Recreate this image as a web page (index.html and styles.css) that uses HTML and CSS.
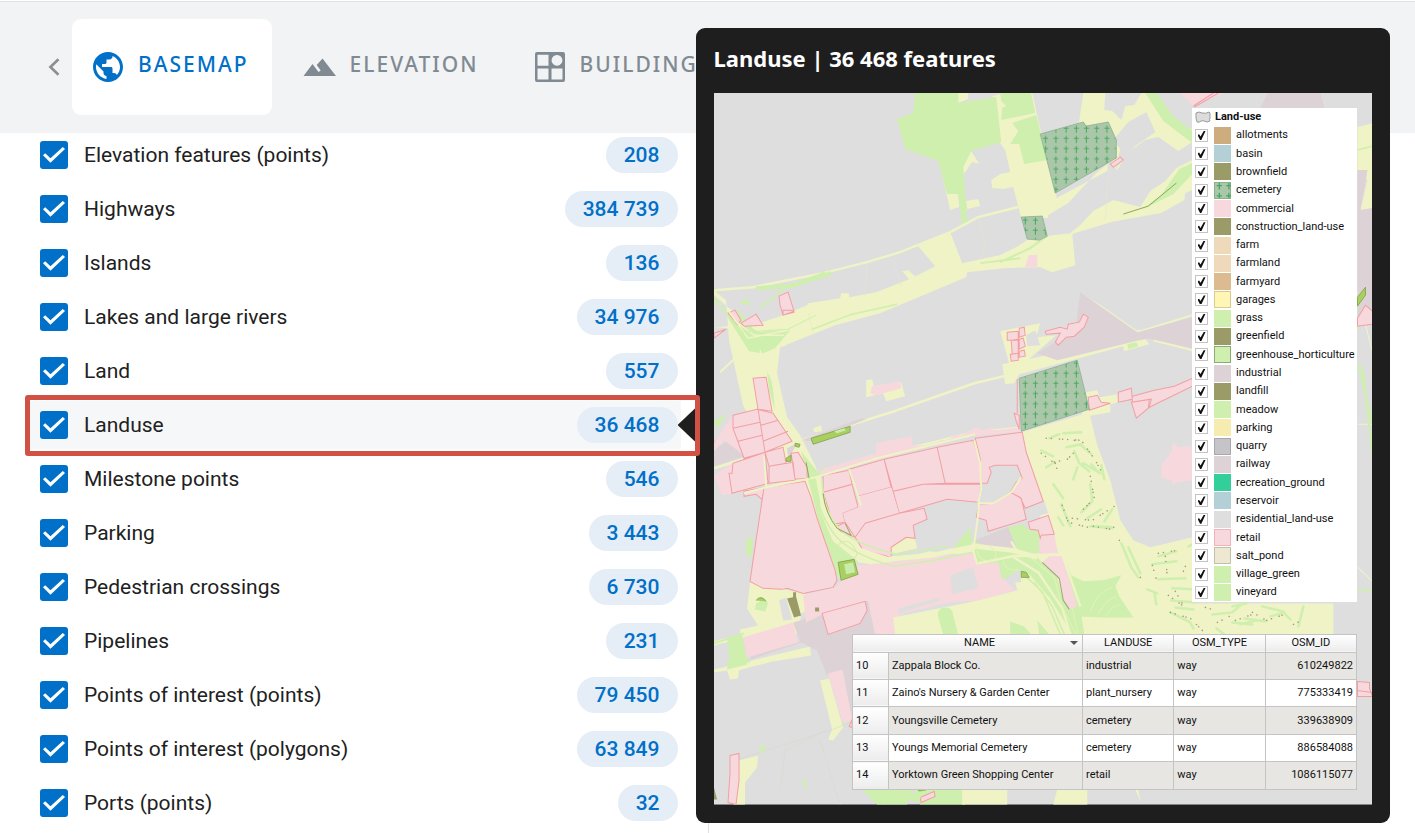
FILE: index.html
```html
<!DOCTYPE html>
<html lang="en">
<head>
<meta charset="utf-8">
<title>Basemap layers</title>
<link rel="stylesheet" href="styles.css">
</head>
<body>
<header class="tabs">
  <button class="scroll-btn" type="button" aria-label="Scroll left"><svg viewBox="0 0 12 18"><path d="M10.5 1.2 2.4 9l8.100 7.800" fill="none" stroke="#8b8f92" stroke-width="2.600"/></svg></button>
  <nav class="tab-list">
    <button class="tab tab-active" type="button">
      <svg class="tab-icon" viewBox="0 0 24 24"><path fill="currentColor" d="M12 2C6.480 2 2 6.480 2 12s4.480 10 10 10 10-4.480 10-10S17.520 2 12 2zm-1 17.930c-3.950-.49-7-3.850-7-7.930 0-.62.080-1.210.210-1.790L9 15v1c0 1.100.9 2 2 2v1.930zm6.900-2.540c-.26-.81-1-1.390-1.900-1.390h-1v-3c0-.55-.45-1-1-1H8v-2h2c.55 0 1-.45 1-1V7h2c1.100 0 2-.9 2-2v-.41c2.930 1.190 5 4.060 5 7.410 0 2.080-.8 3.970-2.100 5.390z"/></svg>
      <span>BASEMAP</span>
    </button>
    <button class="tab" type="button">
      <svg class="tab-icon" viewBox="0 0 36 36"><path fill="currentColor" d="M1.500 27 10.500 15l6 8 2.200-1.600-4-5.400L20.500 9.500 34 27z"/></svg>
      <span>ELEVATION</span>
    </button>
    <button class="tab" type="button">
      <svg class="tab-icon" viewBox="0 0 36 36"><path fill="currentColor" fill-rule="evenodd" d="M5 3h26a2 2 0 0 1 2 2v26a2 2 0 0 1-2 2H5a2 2 0 0 1-2-2V5a2 2 0 0 1 2-2zM5.500 5.800v11h11v-11zM5.500 19.500v11h11v-11zM19.500 19.500v11h11v-11zM25 6a5.400 5.400 0 1 0 .01 0z"/></svg>
      <span>BUILDINGS</span>
    </button>
  </nav>
</header>

<main class="panel">
  <ul class="layers">
    <li class="layer"><label><input class="tick" type="checkbox" checked>Elevation features (points)</label><span class="count">208</span></li>
    <li class="layer"><label><input class="tick" type="checkbox" checked>Highways</label><span class="count">384 739</span></li>
    <li class="layer"><label><input class="tick" type="checkbox" checked>Islands</label><span class="count">136</span></li>
    <li class="layer"><label><input class="tick" type="checkbox" checked>Lakes and large rivers</label><span class="count">34 976</span></li>
    <li class="layer"><label><input class="tick" type="checkbox" checked>Land</label><span class="count">557</span></li>
    <li class="layer layer-current"><label><input class="tick" type="checkbox" checked>Landuse</label><span class="count">36 468</span><span class="pointer"></span><span class="outline"></span></li>
    <li class="layer"><label><input class="tick" type="checkbox" checked>Milestone points</label><span class="count">546</span></li>
    <li class="layer"><label><input class="tick" type="checkbox" checked>Parking</label><span class="count">3 443</span></li>
    <li class="layer"><label><input class="tick" type="checkbox" checked>Pedestrian crossings</label><span class="count">6 730</span></li>
    <li class="layer"><label><input class="tick" type="checkbox" checked>Pipelines</label><span class="count">231</span></li>
    <li class="layer"><label><input class="tick" type="checkbox" checked>Points of interest (points)</label><span class="count">79 450</span></li>
    <li class="layer"><label><input class="tick" type="checkbox" checked>Points of interest (polygons)</label><span class="count">63 849</span></li>
    <li class="layer"><label><input class="tick" type="checkbox" checked>Ports (points)</label><span class="count">32</span></li>
  </ul>
</main>

<aside class="popup">
  <h2 class="popup-title">Landuse | 36 468 features</h2>
  <div class="map">
    <svg class="map-art" viewBox="714 93 658 711" aria-label="Land use map">
      <defs>
        <pattern id="graves" width="10.200" height="10.200" patternUnits="userSpaceOnUse" patternTransform="translate(1020 369)">
          <rect width="10.200" height="10.200" fill="#abc7aa"/>
          <path d="M5 1.500v7M2.500 4h5" stroke="#45a75d" stroke-width="1"/>
        </pattern>
      </defs>
      <rect x="714" y="93" width="658" height="711" fill="#dedede"/>

      <g fill="#eff3c6">
        <path d="M988 93h44l15 67 9 35 1 12-9 6v5h-27l-8-31-10 2-11-1-1-8 9-6 10-2-5-22-6-8-5-44zM958 93h10v6l-10 4zM971 151l8 13-7-2-9 13v-10zM947 194h11l1 13-9 3-11-47zM966 201l12-2 2 7-13 3z"/>
        <path d="M918 246l32-14 12 31 38-8 18-9 12-8 42-5 3 32-23 7-12-5-37 1-36 4-1 5-86 36-45 12-55 22-27-17-38-3 44-4 24-8 24-10 1-2 32-5 1-5h8v4l27-5 33-13-7-8 6-1 7 6 20-10z"/>
        <path d="M1083 93h22l-1 17 8 1 9 9 4-14 9-1 7-12h7l20 22 24 15v12l-14 9-20-14-13 3-19 14-7 13-3 3-5-9-15 12-28 30-20 12-1-12 60-32 2-30-9-17-22 3z"/>
        <path d="M1192 160l-16 8-11 13-15 10-10 16-27-7-20 11-14 15-9 7 2 1 39-12 50-9 23-13 1-7 7-3zM1357 127l15-4v85l-12 2 7-30-10-10z"/>
        <path d="M714 295l14 12 25 20 30-2 4 20-7 2-3 26 10 44 13 18 15 30 18 52 23 20 32 20 45-4 40-11 38 8 40 2v12l-70-8-52-5-50 14-38-5-33-21-22-40-18-50-25-44-14-65-3-40-22-18-23-32z"/>
        <path d="M758 625l-11-17 3-26 53 11 20 10-22 10-2 20-58 4-1-8zM753 635l-39 10v-4l28-8zM714 669l26-6 70-17 1 9-38 6-24 6-10 3-1 8-8 1-3-9-13 2z"/>
        <path d="M820 680l9-2 14 49-10 13-5-1 4-10zM739 760l19-5-1 12-12 15v22h-11l5-24z"/>
        <path d="M1021 432l68-20 8 33 13 35 10 40 13 20 17 7 42-10v66h141v31H1040V510z"/>
        <path d="M866 380l6-1 2 8 27-5 4 14-19 5-3-8-17 4zM1002 364l60-12 45-10 8-3 25-10v12l-35 10-86 23-5 9-9 1zM1086 392l11-2 2 7 18-3 1 8-8 2v8l-29 5zM1122 344l23-5 4 5-25 7zM1000 331l40-8-4 14 20-2-30 26-16 6zM813 428l8-3 1 6-8 1z"/>
      </g>
      <g fill="#dedede">
        <path d="M983 93h22l-17 4-14 2zM1026 335l9-5 5 15-13 1zM1113 140l15-18 18-10 9 20-20 14-20 23 5-20z"/>
      </g>
      <g fill="none" stroke="#eff3c6" stroke-width="2">
        <path d="M714 290l39-3 70-14 44-11 33-10 50-20 28-15 40-10M714 468l110-35 70-22 80-28 38-9" stroke-width="2.500"/>
        <path d="M816 474l60-18 97-24 50-5M714 468l55-16M720 372l30-28M765 487l46-10M1137 332l-37-26-15-9M1137 332l55-17M1153 340l39 10"/>
        <path d="M1357 424h15M1357 567l15 14M1372 352l-15-60" stroke-width="1"/>
        <path d="M808 313l5 20" stroke="#e3e5cf" stroke-width="0.500"/>
        <path d="M978 217l7 26-4 15M893 258l8 28M867 263l-2 33M1110 140l-5 80" stroke="#e4e5d2" stroke-width="0.600"/>
        <path d="M740 758l90-28 20-8M780 790l5-40 40-20M820 740l20 64" stroke="#d6dacb" stroke-width="0.600"/>
      </g>

      <g fill="#ceefad">
        <path d="M915 93h43v10l38-6 5 45-30 9-8 16 4 55-5 2-4-30h-11l-9-33-33-12-8-30 16-6z"/>
        <path d="M1000 93h31l4 20-34 7 1-12 4-2-5-5zM1012 123l24-8 11 45-23 4-5-20h-9l8-13z"/>
        <path d="M1145 93h12l15 22 20 16v12l-29-22zM1192 163l-13 6-18 26-20 15 32-16 19-20z"/>
        <path d="M738 310l18 22 34-2-15 18-12 5-14-2-22-35zM767 371l5 10 3 29-6-20zM801 451l20 25-1 35 13 30 25 20-25 20-17-70zM950 551l20-24 3 22zM746 539l7-2-1 20-6-3z"/>
        <path d="M751 305l-13-3 9-3z"/>
        <path d="M756 603l9-5 3 5-3 8-10-2zM727 637l15-3 4 20 4 8-20 1zM728 660l16-4 3 8-20 5z"/>
        <path d="M862 789h50l-5 15h-30zM915 789h50v15h-45zM802 780l5 1-2 8zM759 746l8-1-6 9zM841 722l4-2-1 6zM1127 344l9-2 2 4-10 3z"/>
        <path d="M714 420l12-5-9 14z"/>
      </g>
      <g fill="none" stroke="#ceefad">
        <path d="M756 288l35-2 40-13" stroke-width="4"/>
        <path d="M760 308l25-20 40-16M1000 262l30-14 18-13M980 263l40-5" stroke-width="2"/>
        <path d="M812 329l40-15 45-10M1357 150l15-4" stroke-width="1.500"/>
        <path d="M1357 300v30" stroke-width="2"/>
        <path d="M1358 365l14 58M1362 365l10 90M1357 590h15M714 643l30-10M714 299l20 22 30 14" stroke-width="2"/>
      </g>

      <g fill="#ddd2d6">
        <path d="M1267 93h53l4 15h-64zM1357 170l10 0-7 40 12-2v99l-15 10z"/>
        <path d="M1080 292l20 14 37 26 55-15v31l-45-10-90 22-20-7 38-23z"/>
        <path d="M714 450l14-10 16 16-30 10zM728 430l5-2 8 17-13-4zM714 440h5v6l-5 2zM787 448l10-5-5 9-3 14z"/>
        <path d="M793 622l75-22 7 34-23 0 0 86-4-20-5-30-16 5-10-25-16-8-50 17 0-4 49-14z"/>
        <path d="M801 440l60-22 5 1-55 22z"/>
      </g>

      <g fill="#f7d9dd">
        <path d="M876 443l36-7v10l21-2 8-4 7 0 6-5 8 0 10-6 4-2 6 3 11-3 0 3 29-3v4l-51 5-152 38-1-4 58-17zM714 475l18-12 10 29-20 3zM724 427l9-12 11 40-20-15-10 11v-7z"/>
        <path d="M803 595l32-8 23-22 32-3 45-5 38-5 25 10 5 16 12 12-37 10-29 2-60 14 11-3 3 21h-28l-7-34-46 14-16 8z"/>
        <path d="M743 637l50-15 5 20-51 15zM828 673l14-4 10 50-9 4zM872 386l28-5 1 7-25 7-6-2zM1161 465l10-13 2-10 5 5 14-1v34l-15 2-4 3-2-5-10-3z"/>
        <path d="M1180 93h44l-31 13zM1026 262l3-7h8v12h-12z"/>
      </g>
      <path fill="#eff3c6" d="M893 617l85-17 39-10-2-8h6l-1-9 20-5 44 66H895z"/>
      <g fill="#ceefad">
        <path d="M973 540l44 13 20 4 20 20 5 20 18 10 4 27h-12l-22-36-20-23-10-6-18 11-4-18-22 2zM1008 527l14-3 8 6 9 1v22l-21 1z"/>
        <path d="M938 616q-1-9 7-9t8 8l5 19h-15zM1010 621l14 5 7 8h-21zM1037 620l12 14h-10z"/>
        <path d="M1063 555l8 20 12 6 20-1 18-5-6 11 4 10 14 21h-30l-23-1-8-15z"/>
      </g>
      <path fill="#ddd2d6" d="M972 541l36-14 11 27z"/>
      <path fill="#f7d9dd" d="M1039 536l15-3 2 12 2 8-19 1zM1042 562l8-7 12 1 15 50-8 3-6-11-3-18z"/>
      <path fill="#dedede" d="M914 525l3 23 32-9 24-22-1-8-34 0-15 4 4 6zM950 575l23-8 5 21-26 6zM898 608l42-11v3l-42 13zM779 600l7-3 6 22-9 1zM1024 507l20-6 4 12-20 5z"/>
      <path fill="#eff3c6" d="M892 546l16-9 6-2 3 13-26 6z"/>
      <g fill="#f7d9dd" stroke="#f29fa4" stroke-width="1">
        <path d="M779 296l9-4 6 19-11 4-3-10zM728 313l7-3 6 10-4 5zM741 323l15-9 7 11-19 1zM783 310h9l2 2-11 3zM714 333l12-4-12 9z"/>
        <path d="M753 378l13-1 6 34-14-2zM733 415l24-6 16 4 19 28-27 11-21 6-11-30zM733 463l32-11 3 31-36 10-3-20h3zM765 452l18-5 3 16-17 3zM769 466l24-4 2 18-26 3zM791 453l7-1 9 15v11l-12 1zM744 491l21-4-3 12-6-5-12 2z"/>
        <path d="M764 487l41-6 6 16 6 21 18 52 2 10-4 7-30 6-16-5-5 1-19-1-13-7 3-21z"/>
        <path d="M823 475l26-5 3 14-29 8zM823 492l29-8 6 23-15 6 2 9-12 2zM849 469l35-10 7 28-33 9zM884 459l53-12 8 36-22 1-30 7zM937 447l36-7 7 20 1 23h-36zM893 491l30-7h58l-3 18-31-3-48 14z"/>
        <path d="M858 496l33-9 8 26-34 10-10 14-10-15-2-9 15-6z" stroke="none"/>
        <path d="M865 523l34-10 25-5 3 11-14 6 2 13-9-1-15 10v10l-28-7-8-13zM845 522l10 15-22-9z"/>
        <path d="M975 438l47-6 4 20 17 49-18 7-5-11-10-5 6-10 6-4-5-13-22 0-6 2 2 5-4 11h-6l-1-25zM979 504l14-1 17-11 11 6 5 21-38 12-2-11-10-3z"/>
        <path d="M1028 522l20-7 6 19-13 1-1 3-2-8-8-1zM822 613l43-12 2 9-7 13-32 11zM730 755l9-2v27l-3 24-8-2 2-29zM920 797l14-6 1 5-14 6zM849 726l3-7v8z"/>
        <path d="M1007 332l11-1v9h-11zM1019 328l5-1 1 8-6 2zM1011 340l7-1v14l-6 1zM1019 339l4-1 2 8-6 3zM1010 354l8-1v7l-7 1zM1019 351l5-1 1 6-6 1zM1017 379v34M1014 413l5 2v14l-3-8z"/>
        <path d="M1045 331l15-4 7 2 1-5 11-2 4-8 5 3-4 10-10 9-8 1-8 8-3-3 5-9-14 1zM1110 164l10-7 3 3-10 7zM1088 397l9-2 4 7 9 1-21 7zM1118 392l13-4 1 11-14 3zM1131 402l18-3-1 9-12 10zM1132 396l22-6 20-4 18-8v8l-43 21 2-8-19 3zM1357 318l8-13 7 6v13l-15 2zM1357 681l12 1v6l3 8h-15z"/>
        <path d="M765 452l-7-43M733 428l27-6M738 441l24-6M761 425l17-5M763 441l25-10M1193 106l20-13M1194 107l24-14M1357 690l15 2" fill="none"/>
      </g>

      <g stroke="#8eaf90" stroke-width="0.800" fill="url(#graves)">
        <path d="M1040 134l43-12 3 4 22-4 8 18v18l-61 35zM1021 217l21-1 5 20-8 4-12-1zM1019 378l58-18 12 49-68 22z"/>
      </g>

      <g fill="none" stroke="#eff3c6">
        <path d="M818 477l6 30 13 25 20 17 30 10 45-4 43-9 37 4 25 7" stroke-width="5"/>
        <path d="M978 563l34-7 50-2 18 52M1011 541l7 12M1012 556l26 16 24 36 8 26" stroke-width="2.500"/>
        <path d="M744 493l22-6 50-10 61-19 98-24M766 486l-2-30M978 503l3-15-1-25-6-23M978 503l15 0 18-11 10-15M973 550l4-28 2-20M973 550l4 14M849 469l12 36" stroke-width="2"/>
        <path d="M734 320l20 15h30M728 310l20 28 40-8M760 350l12 30 12 45" stroke-width="1.500"/>
      </g>
      <g fill="none" stroke="#ceefad" stroke-width="1">
        <path d="M812 479q5 30 20 52t62 35l40-6 38-8M822 478q0 30 15 48t60 28l50-8M811 466l7 8 7-8M1022 573l20 18 18 43M1034 582l18 24 12 28" stroke-width="1.500"/>
        <path d="M836 547q10-12 18 0t-8 12-14-14"/>
        <path d="M716 300l26 32 46-3 28-14" />
      </g>
      <g fill="none" stroke="#e3f2b8" stroke-width="1">
        <path d="M976 545q2 18 14 15t0-14M1003 560q2 12 16 9M1030 557l24 20 8 30 14 27M1090 612q6-20 22-25M1098 614q6-14 18-18M1106 615q5-9 14-11M1072 608l6 26"/>
      </g>
      <g fill="#a9cf60" stroke="#7f9f49" stroke-width="0.800">
        <path d="M811 438l39-12v6l-37 12zM838 562l16-3 4 15-17 6zM786 458l5-3v6h-5zM795 443l5 1-1 3-4-1zM1357 297l8-10v8l-8 11zM756 600q5-6 10 1M918 790l8-1-6 4M1021 571l5 1 3 5-8 0z"/>
      </g>
      <path fill="#c9ecaa" d="M844 564l9-2 2 10-9 2zM834 431l10-3 2 2-9 3z"/>
      <path fill="none" stroke="#84a04e" d="M806 462l3 16M823 493q2 20 14 35l14 7-6-12M1123 214l25-8 28-23" stroke-width="0.900"/>
      <path fill="none" stroke="#9ea476" d="M1042 562l17 16 4 22 6 9"/>
      <g fill="#9b9b68"><path d="M787 598l9-2 5 19-7 2zM815 607h4v4h-4zM793 592h3v5h-3zM714 787l3 12h-3z"/></g>

      <g fill="none" stroke="#ceefad" stroke-width="2.500" stroke-linecap="round">
        <path d="M1049 438l10-4M1063 433l18-1M1041 450l12 6M1054 462l-8 5M1066 447l15-3M1074 451l5 12 10 8M1081 445l10 9M1053 484l10 14M1061 504l9 22M1077 467l-4 12M1090 484l2 17-11 11M1083 463l17 10M1101 465l3 14M1087 518l14-9M1112 509l-8 12M1095 526l16 1M1063 525l-5-8M1099 473l-8-9"/>
        <path d="M1121 543l10 24 7 10M1128 547l12 26M1090 526l22 2M1158 556l18-5M1152 564l24-3M1158 579l27-1M1147 589l10 4M1172 588l20 1M1171 600l24 2M1192 544l-4 2M1154 592l2 12M1170 612l20 10 3 6M1175 607l18 2M1212 614l20-2 10-9M1232 606l14-3M1244 618l22 3M1262 606l20 5 8 8M1240 624l16-4M1270 616l14-4M1303 606l-5 20M1216 628l8 6M1232 622l20 2"/>
      </g>
      <g fill="none" stroke="#a39c7a" stroke-width="1.500" stroke-linecap="round" stroke-dasharray="0.100 5 0.100 8 0.100 3">
        <path d="M1046 438l35 2 14 20 8 15M1041 453l12 9 14-3 8-8M1055 463l3 10M1074 440l2 2M1062 505l6 17 20 5M1090 476l4 22-12 12M1072 518l20 2 22-14M1093 526l18 3 8-7M1119 540l4 3M1140 577l3 2M1158 553l18-3M1165 556l2 20M1152 565l4 14M1185 566l-4 10M1168 595l14 10M1175 591l8 14M1170 612l20 6 12 12M1205 607l10 3M1217 622l12-6M1252 612l14 8 18-6M1235 620l20-7M1293 624l6-3"/>
      </g>
      <path fill="#eff3c6" d="M1057 789h30v15h-34zM962 789h45v15h-45zM1138 789l2 12-5-12z"/>
      <path fill="#ceefad" d="M880 793l14 6-10 5zM900 795l25-5-8 12z"/>
    </svg>

    <div class="legend">
      <div class="legend-head">
        <svg class="legend-mark" viewBox="0 0 16 12"><path d="M1 2q3-2 6 0 4 1 7-1l1 1v5q-1 2 0 3l-3 1q-4-2-6-1-2 2-4 1L1 7z" fill="#dcdcdc" stroke="#9b9b9b"/></svg>
        Land-use
      </div>
      <label class="legend-row"><input class="mini" type="checkbox" checked><i class="swatch sw-tan"></i>allotments</label>
      <label class="legend-row"><input class="mini" type="checkbox" checked><i class="swatch sw-water"></i>basin</label>
      <label class="legend-row"><input class="mini" type="checkbox" checked><i class="swatch sw-olive"></i>brownfield</label>
      <label class="legend-row"><input class="mini" type="checkbox" checked><svg class="swatch" viewBox="0 0 16 16"><path fill="#abc7aa" stroke="#8eaf90" d="M.5.5h15v15H.5z"/><path d="M5 1v6M2.500 3.500h5M14 1v6M11.500 3.500H16M5 10v5M2.500 13h5M14 10v5M11.500 13H16" stroke="#45a75d" stroke-width="1.200"/></svg>cemetery</label>
      <label class="legend-row"><input class="mini" type="checkbox" checked><i class="swatch sw-pink"></i>commercial</label>
      <label class="legend-row"><input class="mini" type="checkbox" checked><i class="swatch sw-olive"></i>construction_land-use</label>
      <label class="legend-row"><input class="mini" type="checkbox" checked><i class="swatch sw-farm"></i>farm</label>
      <label class="legend-row"><input class="mini" type="checkbox" checked><i class="swatch sw-farm"></i>farmland</label>
      <label class="legend-row"><input class="mini" type="checkbox" checked><i class="swatch sw-yard"></i>farmyard</label>
      <label class="legend-row"><input class="mini" type="checkbox" checked><i class="swatch sw-garage"></i>garages</label>
      <label class="legend-row"><input class="mini" type="checkbox" checked><i class="swatch sw-green"></i>grass</label>
      <label class="legend-row"><input class="mini" type="checkbox" checked><i class="swatch sw-olive"></i>greenfield</label>
      <label class="legend-row"><input class="mini" type="checkbox" checked><i class="swatch sw-green sw-green-edge"></i>greenhouse_horticulture</label>
      <label class="legend-row"><input class="mini" type="checkbox" checked><i class="swatch sw-mauve"></i>industrial</label>
      <label class="legend-row"><input class="mini" type="checkbox" checked><i class="swatch sw-olive"></i>landfill</label>
      <label class="legend-row"><input class="mini" type="checkbox" checked><i class="swatch sw-green"></i>meadow</label>
      <label class="legend-row"><input class="mini" type="checkbox" checked><i class="swatch sw-parking"></i>parking</label>
      <label class="legend-row"><input class="mini" type="checkbox" checked><i class="swatch sw-quarry"></i>quarry</label>
      <label class="legend-row"><input class="mini" type="checkbox" checked><i class="swatch sw-mauve"></i>railway</label>
      <label class="legend-row"><input class="mini" type="checkbox" checked><i class="swatch sw-rec"></i>recreation_ground</label>
      <label class="legend-row"><input class="mini" type="checkbox" checked><i class="swatch sw-water"></i>reservoir</label>
      <label class="legend-row"><input class="mini" type="checkbox" checked><i class="swatch sw-grey"></i>residential_land-use</label>
      <label class="legend-row"><input class="mini" type="checkbox" checked><i class="swatch sw-pink sw-pink-edge"></i>retail</label>
      <label class="legend-row"><input class="mini" type="checkbox" checked><i class="swatch sw-salt"></i>salt_pond</label>
      <label class="legend-row"><input class="mini" type="checkbox" checked><i class="swatch sw-green"></i>village_green</label>
      <label class="legend-row"><input class="mini" type="checkbox" checked><i class="swatch sw-green"></i>vineyard</label>
    </div>

    <table class="attrs">
      <colgroup><col class="col-num"><col class="col-name"><col><col><col></colgroup>
      <thead><tr><th class="name-head" colspan="2"><span>NAME</span></th><th>LANDUSE</th><th>OSM_TYPE</th><th>OSM_ID</th></tr></thead>
      <tbody>
        <tr><th>10</th><td>Zappala Block Co.</td><td>industrial</td><td>way</td><td class="id">610249822</td></tr>
        <tr><th>11</th><td>Zaino's Nursery &amp; Garden Center</td><td>plant_nursery</td><td>way</td><td class="id">775333419</td></tr>
        <tr><th>12</th><td>Youngsville Cemetery</td><td>cemetery</td><td>way</td><td class="id">339638909</td></tr>
        <tr><th>13</th><td>Youngs Memorial Cemetery</td><td>cemetery</td><td>way</td><td class="id">886584088</td></tr>
        <tr><th>14</th><td>Yorktown Green Shopping Center</td><td>retail</td><td>way</td><td class="id">1086115077</td></tr>
      </tbody>
    </table>
  </div>
</aside>
</body>
</html>
```
FILE: styles.css
```css
* { box-sizing: border-box; }

body {
  display: flex;
  flex-direction: column;
  position: relative;
  height: 100vh;
  margin: 0;
  overflow: hidden;
  background: #fff;
  color: #212121;
  font-family: Roboto, sans-serif;
}

button {
  border: 0;
  background: none;
  font: inherit;
  cursor: pointer;
}

/* Category tabs */
.tabs {
  display: flex;
  flex: none;
  align-items: center;
  position: relative;
  z-index: 1;
  margin-top: 1px;
  padding: 17px 0 18px 36px;
  border-top: 1px solid #dde1e5;
  background: #f2f3f5;
}
.scroll-btn { display: flex; justify-content: center; width: 36px; padding: 0; }
.scroll-btn svg { width: 12px; height: 18px; }
.tab-list { display: flex; gap: 12px; }
.tab {
  display: flex;
  align-items: center;
  gap: 12px;
  height: 96px;
  padding: 0 23px 0 18px;
  border-radius: 9px;
  color: #808a92;
  font-family: "Noto Sans", sans-serif;
  font-size: 21px;
  font-weight: 500;
  line-height: 28px;
  letter-spacing: 2px;
  white-space: nowrap;
}
.tab span { padding-bottom: 6px; }
.tab-active { background: #fff; color: #0070c8; }
.tab-icon { flex: none; width: 36px; height: 36px; }

/* Layer list */
.panel {
  flex: 1;
  width: calc(50% + 1px);
  min-height: 0;
  border-right: 1px solid #dcdfe3;
}
.layers {
  display: flex;
  flex-direction: column;
  gap: 6px;
  margin: -2px 0 0;
  padding: 0 27px 0 30px;
  list-style: none;
}
.layer {
  display: flex;
  flex: none;
  align-items: center;
  justify-content: space-between;
  position: relative;
  height: 48px;
  padding: 0 3px 0 10px;
  font-size: 21px;
  line-height: 30px;
}
.layer label { display: flex; align-items: center; gap: 16px; }
.layer-current { background: #f6f7f9; }
.tick {
  display: grid;
  place-items: center;
  width: 28px;
  height: 28px;
  margin: 0;
  border-radius: 3px;
  background: #0070c8;
  appearance: none;
}
.tick::before {
  content: "";
  width: 22px;
  height: 16px;
  background: #fff;
  clip-path: polygon(0 52%, 10% 39%, 34% 71%, 90% 0, 100% 13%, 34% 98%);
}
.count {
  padding: 3px 18px;
  border-radius: 18px;
  background: #e5edf7;
  color: #0070c8;
  font-weight: 500;
}
.pointer {
  position: absolute;
  top: 7px;
  left: 100%;
  z-index: 3;
  width: 18px;
  height: 34px;
  margin-left: -3px;
  background: #1e1e1e;
  clip-path: polygon(0 50%, 100% 0, 100% 100%);
}
.outline {
  position: absolute;
  inset: -6px -19px -7px -5px;
  z-index: 4;
  border: 5px solid #d15244;
  border-radius: 3px;
}

/* Preview popup */
.popup {
  position: absolute;
  top: 28px;
  right: 25px;
  left: calc(50% - 12px);
  z-index: 2;
  padding: 12px 18px 18px;
  border-radius: 9px;
  background: #1e1e1e;
}
.popup-title {
  margin: 0 0 17px;
  color: #fff;
  font-family: "Noto Sans", sans-serif;
  font-size: 22px;
  font-weight: 700;
  line-height: 36px;
}
.map { position: relative; color: #111; font-family: Roboto, sans-serif; font-size: 11px; }
.map-art { display: block; width: 100%; }

.legend {
  display: grid;
  grid-auto-rows: 1fr;
  position: absolute;
  top: 15px;
  right: 15px;
  bottom: 203px;
  width: 165px;
  padding-left: 3px;
  background: #fff;
}
.legend-head, .legend-row { display: flex; align-items: center; min-height: 0; line-height: 14px; white-space: nowrap; }
.legend-head { gap: 4px; font-weight: 700; }
.legend-mark { width: 16px; height: 12px; }
.mini {
  display: grid;
  place-items: center;
  width: 13px;
  height: 13px;
  margin: 0 6px 0 0;
  border: 1px solid #c4c4c4;
  background: #fff;
  appearance: none;
}
.mini::before {
  content: "";
  width: 8px;
  height: 9px;
  background: #111;
  clip-path: polygon(0 45%, 20% 38%, 38% 62%, 78% 0, 100% 0, 48% 100%, 32% 100%);
}
.swatch { flex: none; width: 17px; height: 17px; margin-right: 5px; }
.sw-tan { background: #cdad7e; }
.sw-water { background: #b3d0d6; }
.sw-olive { background: #9b9b68; }
.sw-pink { background: #f7d9dd; }
.sw-farm { background: #eedabb; }
.sw-yard { background: #ddbb90; }
.sw-garage { border: 1px solid #d8cb90; background: #fff5b5; }
.sw-green { background: #ceefad; }
.sw-green-edge { border: 1px solid #8cab78; }
.sw-mauve { background: #ddd2d6; }
.sw-parking { background: #f7ecb0; }
.sw-quarry { border: 1px solid #a9a9ad; background: #c5c4c8; }
.sw-rec { background: #33cf9b; }
.sw-grey { background: #dedede; }
.sw-pink-edge { border: 1px solid #f2b2b7; }
.sw-salt { border: 1px solid #c3bfa8; background: #eee8d2; }

.attrs {
  position: absolute;
  right: 15px;
  bottom: 15px;
  width: 505px;
  height: 156px;
  border-collapse: collapse;
  table-layout: fixed;
  background: #fff;
  line-height: 14px;
}
.attrs th, .attrs td { height: 27px; padding: 0 3px; border: 1px solid #c4c4c4; font-weight: 400; text-align: left; white-space: nowrap; }
.attrs th { background: linear-gradient(#fff, #ececec); }
.attrs thead th { height: 18px; padding: 0; text-align: center; }
.attrs tbody tr:nth-child(odd) td { background: #e7e6e2; }
.attrs .id { text-align: right; }
.col-num { width: 36px; }
.col-name { width: 194px; }
.name-head { position: relative; }
.name-head span { padding-left: 24px; }
.name-head::after {
  content: "";
  position: absolute;
  top: 6px;
  right: 4px;
  border: 4px solid transparent;
  border-top-color: #555;
  border-bottom: 0;
}
```
